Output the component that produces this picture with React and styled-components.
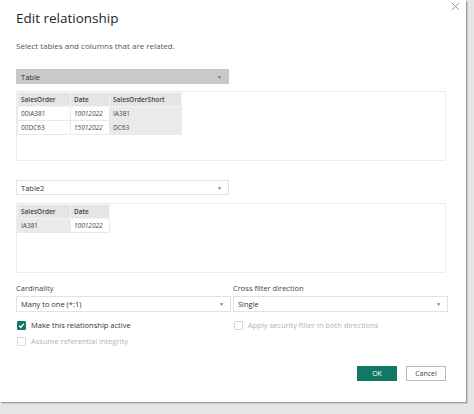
import React from 'react';
import styled, { createGlobalStyle } from 'styled-components';

// * Global page styles ////////////////
const GlobalStyle = createGlobalStyle`
	html, body {
		margin: 0;
		padding: 0;
		background-color: #e6e6e6;
		font-family: 'Open Sans', 'Noto Sans', 'Liberation Sans', sans-serif;
		color: #333;
	}
`;
/////////////////////////////////////////////////////////////////////////

const Page = styled.div`
	width: 474px;
	height: 414px;
	background-color: #e6e6e6;
`;

// * Dialog frame ////////////////
const Dialog = styled.div`
	position: relative;
	box-sizing: border-box;
	width: 466px;
	height: 402px;
	background-color: #fff;
	box-shadow: 1px 1px 0 #a0a0a0, 2px 2px 0 #c8c8c8;
	padding: 8px 20px 0 16px;
	display: flex;
	flex-direction: column;
`;

const Close = styled.button`
	position: absolute;
	top: 0;
	right: 5px;
	width: 12px;
	height: 12px;
	padding: 0;
	border: none;
	background: none;
	color: #888;
	display: grid;
	place-items: center;
`;

const Title = styled.h1`
	margin: 0;
	font-size: 13.5px;
	font-weight: 400;
	line-height: 20px;
	color: #252525;
`;

const Subtitle = styled.p`
	margin: 12px 0 0;
	font-size: 8px;
	line-height: 12px;
	color: #555;
`;
/////////////////////////////////////////////////////////////////////////

// * Dropdowns ////////////////
const Select = styled.div`
	box-sizing: border-box;
	width: ${(props) => props.width || '213px'};
	height: ${(props) => props.height || '15px'};
	margin-top: ${(props) => props.top || '0'};
	padding: 0 6px 0 4px;
	display: flex;
	align-items: center;
	justify-content: space-between;
	font-size: 7.5px;
	color: #333;
	background-color: ${(props) => (props.active ? '#c9c9c9' : '#fff')};
	border: 1px solid ${(props) => (props.active ? '#c9c9c9' : '#e2e2e2')};

	span.arrow {
		font-size: 5px;
		color: #777;
	}
`;

const Dropdown = ({ children, ...props }) => (
	<Select {...props}>
		<span>{children}</span>
		<span className="arrow">▼</span>
	</Select>
);
/////////////////////////////////////////////////////////////////////////

// * Table previews ////////////////
const Preview = styled.div`
	box-sizing: border-box;
	width: 430px;
	height: 70px;
	margin-top: ${(props) => props.top};
	border: 1px solid #ececec;
	padding: 0;
`;

const Grid = styled.table`
	border-collapse: collapse;
	font-size: 6.5px;
	color: #444;

	th,
	td {
		height: 13px;
		padding: 0 3px;
		text-align: left;
		white-space: nowrap;
		border: 1px solid #e9e9e9;
	}

	th {
		font-weight: 600;
		background-color: #e5e5e5;
		border-color: #f4f4f4;
	}

	td.date {
		font-style: italic;
	}

	.sel {
		background-color: #eaeaea;
	}
`;

const Col = styled.col`
	width: ${(props) => props.w};
`;
/////////////////////////////////////////////////////////////////////////

// * Options area ////////////////
const Options = styled.div`
	margin-top: 10px;
	display: grid;
	grid-template-columns: 215px 215px;
	column-gap: 2px;
	width: 432px;
`;

const Field = styled.div`
	display: flex;
	flex-direction: column;
`;

const Label = styled.label`
	font-size: 7.5px;
	line-height: 11px;
	color: #444;
	margin-bottom: 2px;
`;

const Checks = styled.div`
	display: flex;
	flex-direction: column;
	gap: 4px;
	margin-top: 7px;
`;

const CheckRow = styled.div`
	display: flex;
	align-items: center;
	gap: 5px;
	height: 12px;
	padding-left: 1px;
	font-size: 7.5px;
	color: ${(props) => (props.disabled ? '#b3b3b3' : '#333')};
`;

const Box = styled.span`
	box-sizing: border-box;
	width: 9px;
	height: 9px;
	border-radius: 1px;
	display: grid;
	place-items: center;
	background-color: ${(props) => (props.checked ? '#117865' : '#fff')};
	border: 1px solid ${(props) => (props.checked ? '#117865' : '#d6d6d6')};
`;

const Check = ({ checked, disabled, children }) => (
	<CheckRow disabled={disabled}>
		<Box checked={checked}>
			{checked && (
				<svg width="7" height="7" viewBox="0 0 8 8">
					<path d="M1.2 4.2 L3.2 6 L6.8 1.8" fill="none" stroke="#fff" strokeWidth="1.4" />
				</svg>
			)}
		</Box>
		{children}
	</CheckRow>
);
/////////////////////////////////////////////////////////////////////////

// * Footer buttons ////////////////
const Footer = styled.div`
	width: 430px;
	margin-top: 19px;
	display: flex;
	justify-content: flex-end;
	gap: 9px;
`;

const Button = styled.button`
	box-sizing: border-box;
	width: 40px;
	height: 15px;
	padding: 0;
	font-family: inherit;
	font-size: 7px;
	color: ${(props) => (props.primary ? '#fff' : '#444')};
	background-color: ${(props) => (props.primary ? '#117865' : '#fff')};
	border: 1px solid ${(props) => (props.primary ? '#117865' : '#b8b8b8')};
`;
/////////////////////////////////////////////////////////////////////////

export default function App() {
	return (
		<Page>
			<GlobalStyle />
			<Dialog>
				<Close aria-label="Close">
					<svg width="9" height="9" viewBox="0 0 10 10">
						<path d="M1 1 L9 9 M9 1 L1 9" stroke="#8a8a8a" strokeWidth="1" />
					</svg>
				</Close>
				<Title>Edit relationship</Title>
				<Subtitle>Select tables and columns that are related.</Subtitle>

				<Dropdown active top="17px">Table</Dropdown>
				<Preview top="7px">
					<Grid>
						<colgroup>
							<Col w="53px" />
							<Col w="39px" />
							<Col w="72px" />
						</colgroup>
						<thead>
							<tr>
								<th>SalesOrder</th>
								<th>Date</th>
								<th>SalesOrderShort</th>
							</tr>
						</thead>
						<tbody>
							<tr>
								<td>00IA381</td>
								<td className="date">10012022</td>
								<td className="sel">IA381</td>
							</tr>
							<tr>
								<td>00DC63</td>
								<td className="date">15012022</td>
								<td className="sel">DC63</td>
							</tr>
						</tbody>
					</Grid>
				</Preview>

				<Dropdown top="19px">Table2</Dropdown>
				<Preview top="8px">
					<Grid>
						<colgroup>
							<Col w="53px" />
							<Col w="39px" />
						</colgroup>
						<thead>
							<tr>
								<th>SalesOrder</th>
								<th>Date</th>
							</tr>
						</thead>
						<tbody>
							<tr>
								<td className="sel">IA381</td>
								<td className="date">10012022</td>
							</tr>
						</tbody>
					</Grid>
				</Preview>

				<Options>
					<Field>
						<Label>Cardinality</Label>
						<Dropdown width="215px" height="16px">Many to one (*:1)</Dropdown>
						<Checks>
							<Check checked>Make this relationship active</Check>
							<Check disabled>Assume referential integrity</Check>
						</Checks>
					</Field>
					<Field>
						<Label>Cross filter direction</Label>
						<Dropdown width="215px" height="16px">Single</Dropdown>
						<Checks>
							<Check disabled>Apply security filter in both directions</Check>
						</Checks>
					</Field>
				</Options>

				<Footer>
					<Button primary>OK</Button>
					<Button>Cancel</Button>
				</Footer>
			</Dialog>
		</Page>
	);
}
